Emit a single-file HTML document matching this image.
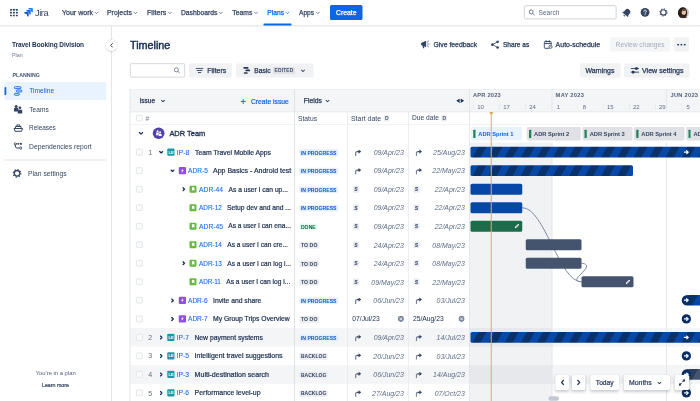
<!DOCTYPE html>
<html><head><meta charset="utf-8"><title>Timeline</title>
<style>
html,body{margin:0;padding:0;}
body{width:700px;height:401px;overflow:hidden;background:#fff;position:relative;font-family:"Liberation Sans",sans-serif;}
.t{position:absolute;white-space:nowrap;margin:0;padding:0;}
.b{position:absolute;margin:0;padding:0;display:block;}
#root{position:absolute;left:0;top:0;width:2800px;height:1604px;transform:scale(0.25);transform-origin:0 0;}
#wrap{position:absolute;left:0;top:0;width:700px;height:401px;overflow:hidden;filter:saturate(1.0001);}
</style></head><body><div id="wrap"><div id="root">
<div class="b" style="left:0px;top:0px;width:2800px;height:101.2px;background:#fff;"></div>
<div class="b" style="left:0px;top:101.2px;width:2800px;height:4px;background:#e3e5ea;"></div>
<div class="b" style="left:0px;top:105.2px;width:2800px;height:4.8px;background:linear-gradient(#eef0f2,#fff);"></div>
<svg class="b" style="left:40.4px;top:35.2px;width:31.2px;height:31.2px;" viewBox="0 0 8.2 8.2"><rect x="0.0" y="0.0" width="2" height="2" rx="0.4" fill="#344563"/><rect x="3.1" y="0.0" width="2" height="2" rx="0.4" fill="#344563"/><rect x="6.2" y="0.0" width="2" height="2" rx="0.4" fill="#344563"/><rect x="0.0" y="3.1" width="2" height="2" rx="0.4" fill="#344563"/><rect x="3.1" y="3.1" width="2" height="2" rx="0.4" fill="#344563"/><rect x="6.2" y="3.1" width="2" height="2" rx="0.4" fill="#344563"/><rect x="0.0" y="6.2" width="2" height="2" rx="0.4" fill="#344563"/><rect x="3.1" y="6.2" width="2" height="2" rx="0.4" fill="#344563"/><rect x="6.2" y="6.2" width="2" height="2" rx="0.4" fill="#344563"/></svg>
<svg class="b" style="left:96.4px;top:32.4px;width:35.2px;height:35.2px;" viewBox="0 0 9 9"><path d="M8.6 0 H4.4 a1.9 1.9 0 0 0 1.9 1.9 h0.8 v0.75 a1.9 1.9 0 0 0 1.9 1.9 V0.4 A0.4 0.4 0 0 0 8.6 0z" fill="#2684ff"/><path d="M6.5 2.1 H2.3 a1.9 1.9 0 0 0 1.9 1.9 h0.8 v0.75 a1.9 1.9 0 0 0 1.9 1.9 V2.5 A0.4 0.4 0 0 0 6.5 2.1z" fill="#1a6ff0"/><path d="M4.4 4.2 H0.2 a1.9 1.9 0 0 0 1.9 1.9 h0.8 v0.75 a1.9 1.9 0 0 0 1.9 1.9 V4.6 A0.4 0.4 0 0 0 4.4 4.2z" fill="#0c5ad8"/></svg>
<div class="t" style="left:140px;top:26.88px;font-size:37.2px;line-height:44.64px;color:#344563;letter-spacing:-1.69px;">Jira</div>
<div class="t" style="left:248px;top:33.12px;font-size:28.12px;line-height:33.76px;color:#344563;-webkit-text-stroke:1px #344563;">Your work</div>
<svg class="b" style="left:376.4px;top:44.8px;width:19.2px;height:12.8px;" viewBox="0 0 6 4"><path d="M1 1 L3 3 L5 1" fill="none" stroke="#344563" stroke-width="0.8" stroke-linecap="round" stroke-linejoin="round"/></svg>
<div class="t" style="left:428px;top:33.4px;font-size:27.68px;line-height:33.2px;color:#344563;-webkit-text-stroke:1px #344563;">Projects</div>
<svg class="b" style="left:532.4px;top:44.8px;width:19.2px;height:12.8px;" viewBox="0 0 6 4"><path d="M1 1 L3 3 L5 1" fill="none" stroke="#344563" stroke-width="0.8" stroke-linecap="round" stroke-linejoin="round"/></svg>
<div class="t" style="left:588px;top:33px;font-size:28.36px;line-height:34.04px;color:#344563;-webkit-text-stroke:1px #344563;">Filters</div>
<svg class="b" style="left:670.4px;top:44.8px;width:19.2px;height:12.8px;" viewBox="0 0 6 4"><path d="M1 1 L3 3 L5 1" fill="none" stroke="#344563" stroke-width="0.8" stroke-linecap="round" stroke-linejoin="round"/></svg>
<div class="t" style="left:724px;top:33.84px;font-size:26.92px;line-height:32.32px;color:#344563;letter-spacing:0px;-webkit-text-stroke:1px #344563;">Dashboards</div>
<svg class="b" style="left:874.4px;top:44.8px;width:19.2px;height:12.8px;" viewBox="0 0 6 4"><path d="M1 1 L3 3 L5 1" fill="none" stroke="#344563" stroke-width="0.8" stroke-linecap="round" stroke-linejoin="round"/></svg>
<div class="t" style="left:929.2px;top:33.72px;font-size:27.16px;line-height:32.6px;color:#344563;-webkit-text-stroke:1px #344563;">Teams</div>
<svg class="b" style="left:1014.4px;top:44.8px;width:19.2px;height:12.8px;" viewBox="0 0 6 4"><path d="M1 1 L3 3 L5 1" fill="none" stroke="#344563" stroke-width="0.8" stroke-linecap="round" stroke-linejoin="round"/></svg>
<div class="t" style="left:1069.2px;top:33.96px;font-size:26.72px;line-height:32.08px;color:#0c66e4;letter-spacing:-0.01px;-webkit-text-stroke:1px #0c66e4;">Plans</div>
<svg class="b" style="left:1140.4px;top:44.8px;width:19.2px;height:12.8px;" viewBox="0 0 6 4"><path d="M1 1 L3 3 L5 1" fill="none" stroke="#0c66e4" stroke-width="0.8" stroke-linecap="round" stroke-linejoin="round"/></svg>
<div class="t" style="left:1196px;top:34.2px;font-size:26.32px;line-height:31.6px;color:#344563;-webkit-text-stroke:1px #344563;">Apps</div>
<svg class="b" style="left:1262.4px;top:44.8px;width:19.2px;height:12.8px;" viewBox="0 0 6 4"><path d="M1 1 L3 3 L5 1" fill="none" stroke="#344563" stroke-width="0.8" stroke-linecap="round" stroke-linejoin="round"/></svg>
<div class="b" style="left:1054px;top:94.4px;width:112px;height:7.2px;background:#0c66e4;border-radius:2.4px;"></div>
<div class="b" style="left:1320px;top:20px;width:130px;height:60px;background:#0c66e4;border-radius:6.4px;"></div>
<div class="t" style="left:1344px;top:33.6px;font-size:27.32px;line-height:32.8px;color:#fff;-webkit-text-stroke:1px #fff;">Create</div>
<div class="b" style="left:2096px;top:21.2px;width:370px;height:56px;background:#fff;border-radius:8px;border:3.6px solid #c1c7d0;box-sizing:border-box;"></div>
<svg class="b" style="left:2113.2px;top:36px;width:28px;height:28px;" viewBox="0 0 6 6"><circle cx="2.5" cy="2.5" r="1.7" fill="none" stroke="#5e6c84" stroke-width="0.75"/><path d="M3.8 3.8 L5.3 5.3" stroke="#5e6c84" stroke-width="0.75" stroke-linecap="round"/></svg>
<div class="t" style="left:2154px;top:33.68px;font-size:26.52px;line-height:31.84px;color:#5e6c84;letter-spacing:-0px;">Search</div>
<svg class="b" style="left:2486.4px;top:29.6px;width:41.6px;height:41.6px;" viewBox="0 0 10 10"><g transform="rotate(40 5 5)"><path d="M5 1.2 a2.7 2.7 0 0 1 2.7 2.7 v1.9 l0.9 1.2 v0.5 h-7.2 v-0.5 l0.9-1.2 v-1.9 a2.7 2.7 0 0 1 2.7-2.7z" fill="#344563"/><path d="M3.9 8.1 h2.2 a1.1 1.1 0 0 1 -2.2 0z" fill="#344563"/></g></svg>
<svg class="b" style="left:2561.2px;top:30.4px;width:38.4px;height:38.4px;" viewBox="0 0 10 10"><circle cx="5" cy="5" r="4.6" fill="#344563"/><path d="M3.7 4 a1.35 1.35 0 1 1 2 1.2 c-0.5 0.3 -0.7 0.5 -0.7 1" fill="none" stroke="#fff" stroke-width="0.9" stroke-linecap="round"/><circle cx="5" cy="7.5" r="0.55" fill="#fff"/></svg>
<svg class="b" style="left:2635.2px;top:31.2px;width:37.6px;height:37.6px;" viewBox="0 0 10 10"><circle cx="5" cy="5" r="2.9" fill="none" stroke="#344563" stroke-width="1.25"/><circle cx="5" cy="5" r="3.95" fill="none" stroke="#344563" stroke-width="1.0" stroke-dasharray="1.25 1.85"/></svg>
<svg class="b" style="left:2711.2px;top:27.6px;width:45.6px;height:45.6px;" viewBox="0 0 10 10"><defs><clipPath id="av"><circle cx="5" cy="5" r="5"/></clipPath></defs><g clip-path="url(#av)"><rect width="10" height="10" fill="#cfc9c4"/><ellipse cx="4.2" cy="5.2" rx="4.1" ry="5.2" fill="#2a1c17"/><ellipse cx="5.3" cy="4.5" rx="1.9" ry="2.4" fill="#e7c3a8"/><path d="M1 10 Q5.2 6 9.4 10z" fill="#3a2924"/><path d="M3.3 4.2 Q4.8 1.2 7.2 3.6 Q5.6 2.6 3.3 4.2z" fill="#2a1c17"/></g></svg>
<div class="b" style="left:444px;top:104px;width:4px;height:1500px;background:#e4e6ea;"></div>
<div class="t" style="left:48px;top:162.4px;font-size:26px;line-height:31.2px;color:#172b4d;font-weight:700;letter-spacing:-0.29px;">Travel Booking Division</div>
<div class="t" style="left:48px;top:205.68px;font-size:21.2px;line-height:25.44px;color:#6b778c;letter-spacing:-0.01px;">Plan</div>
<div class="t" style="left:49.6px;top:288.16px;font-size:21.08px;line-height:25.28px;color:#44546f;font-weight:700;letter-spacing:-0.01px;">PLANNING</div>
<div class="b" style="left:18.4px;top:328px;width:406.4px;height:72px;background:#e9f2ff;border-radius:6px;"></div>
<div class="b" style="left:17.6px;top:347.6px;width:7.2px;height:32.4px;background:#0c66e4;border-radius:3.6px;"></div>
<svg class="b" style="left:53.6px;top:343.6px;width:37.6px;height:40px;" viewBox="0 0 9.4 10"><rect x="0.85" y="0.75" width="6.6" height="1.9" rx="0.95" fill="none" stroke="#0c66e4" stroke-width="0.95"/><rect x="3" y="4.05" width="5.5" height="1.9" rx="0.95" fill="none" stroke="#0c66e4" stroke-width="0.95"/><rect x="0.85" y="7.35" width="5" height="1.9" rx="0.95" fill="none" stroke="#0c66e4" stroke-width="0.95"/></svg>
<div class="t" style="left:117.2px;top:348.48px;font-size:26.52px;line-height:31.84px;color:#0c66e4;letter-spacing:-0px;">Timeline</div>
<svg class="b" style="left:53.6px;top:418.4px;width:37.6px;height:37.6px;" viewBox="0 0 9.4 9.4"><circle cx="2.6" cy="1.9" r="1.5" fill="#344563"/><circle cx="6.4" cy="3.3" r="1.4" fill="#344563"/><path d="M0.4 4.4 a0.8 0.8 0 0 1 0.8-0.8 h2.8 a0.8 0.8 0 0 1 0.8 0.8 v2.6 h-4.4z" fill="#344563"/><path d="M4.2 6 a0.8 0.8 0 0 1 0.8-0.8 h3 a0.8 0.8 0 0 1 0.8 0.8 v2.4 a0.6 0.6 0 0 1 -0.6 0.6 h-3.4 a0.6 0.6 0 0 1 -0.6-0.6z" fill="#344563"/></svg>
<div class="t" style="left:117.2px;top:421.8px;font-size:26.36px;line-height:31.64px;color:#344563;letter-spacing:-0.01px;">Teams</div>
<svg class="b" style="left:52.8px;top:494.4px;width:40px;height:34.4px;" viewBox="0 0 10 8.6"><path d="M0.7 5 h8.6 l-1 2.8 h-6.6z" fill="none" stroke="#344563" stroke-width="1" stroke-linejoin="round"/><path d="M2.2 5 V3 h5.6 V5 M3.6 3 V1.4 h2.8 V3" fill="none" stroke="#344563" stroke-width="1" stroke-linejoin="round"/></svg>
<div class="t" style="left:116.4px;top:496.8px;font-size:26px;line-height:31.2px;color:#344563;letter-spacing:-0.2px;">Releases</div>
<svg class="b" style="left:54.4px;top:568.8px;width:40px;height:36px;" viewBox="0 0 10 9"><path d="M1.8 1.6 v2.2 a2 2 0 0 0 2 2 h2.2 M1.8 1.6 h4" fill="none" stroke="#344563" stroke-width="1"/><circle cx="1.8" cy="1.6" r="1.1" fill="#fff" stroke="#344563" stroke-width="0.9"/><circle cx="7.4" cy="1.6" r="1.1" fill="#344563"/><circle cx="7.2" cy="5.8" r="1.1" fill="#fff" stroke="#344563" stroke-width="0.9"/><path d="M4.6 0.5 l1.3 1.1 l-1.3 1.1z" fill="#344563"/></svg>
<div class="t" style="left:116.4px;top:570.64px;font-size:26.96px;line-height:32.36px;color:#344563;letter-spacing:0px;">Dependencies report</div>
<div class="b" style="left:16px;top:638.4px;width:410.4px;height:3.6px;background:#e1e4e8;"></div>
<svg class="b" style="left:48.8px;top:674.4px;width:38.4px;height:38.4px;" viewBox="0 0 10 10"><circle cx="5" cy="5" r="2.9" fill="none" stroke="#344563" stroke-width="1.4"/><circle cx="5" cy="5" r="4" fill="none" stroke="#344563" stroke-width="1.2" stroke-dasharray="1.3 1.84"/></svg>
<div class="t" style="left:112.4px;top:677.48px;font-size:26.88px;line-height:32.24px;color:#344563;letter-spacing:0.01px;">Plan settings</div>
<div class="t" style="left:142.8px;top:1477.52px;font-size:23.44px;line-height:28.12px;color:#505f79;">You're in a plan</div>
<div class="t" style="left:168px;top:1529.32px;font-size:21.12px;line-height:25.36px;color:#344563;-webkit-text-stroke:0.8px #344563;">Learn more</div>
<div class="b" style="left:423.2px;top:159.2px;width:44.8px;height:44.8px;background:#fff;border-radius:22.4px;box-shadow:0 0 0 2px rgba(9,30,66,0.10),0 3.2px 6.4px rgba(9,30,66,0.16);"></div>
<svg class="b" style="left:438.4px;top:170.4px;width:16px;height:22.4px;" viewBox="0 0 4 5.6"><path d="M2.9 1 L1.2 2.8 L2.9 4.6" fill="none" stroke="#344563" stroke-width="1" stroke-linecap="round" stroke-linejoin="round"/></svg>
<div class="t" style="left:520px;top:154.16px;font-size:43.08px;line-height:51.68px;color:#172b4d;-webkit-text-stroke:1.8px #172b4d;">Timeline</div>
<svg class="b" style="left:1682px;top:159.2px;width:38.4px;height:37.6px;" viewBox="0 0 9.6 9.4"><path d="M0.6 3.3 L5.6 1 V7.4 L0.6 5.3z" fill="#344563"/><path d="M1.8 5.6 L2.6 8.6 h1.3 L3.3 5.9z" fill="#344563"/><path d="M6.8 2.2 l1.2-0.9 M7 4.2 h1.7 M6.8 6 l1.2 0.9" stroke="#344563" stroke-width="0.7" stroke-linecap="round"/></svg>
<div class="t" style="left:1734px;top:161.64px;font-size:27.28px;line-height:32.72px;color:#253858;-webkit-text-stroke:1px #253858;">Give feedback</div>
<svg class="b" style="left:1963.2px;top:161.2px;width:34.4px;height:35.2px;" viewBox="0 0 8.6 8.8"><path d="M6.8 1.6 L1.8 4.4 L6.8 7.2" fill="none" stroke="#344563" stroke-width="0.8"/><circle cx="6.9" cy="1.5" r="1.3" fill="#344563"/><circle cx="1.6" cy="4.4" r="1.3" fill="#344563"/><circle cx="6.9" cy="7.3" r="1.3" fill="#344563"/></svg>
<div class="t" style="left:2012px;top:162.28px;font-size:26.2px;line-height:31.44px;color:#253858;letter-spacing:-0.01px;-webkit-text-stroke:1px #253858;">Share as</div>
<svg class="b" style="left:2174.4px;top:160px;width:38.4px;height:37.6px;" viewBox="0 0 9.6 9.4"><rect x="0.7" y="1.5" width="7" height="6.8" rx="1" fill="none" stroke="#344563" stroke-width="1"/><path d="M0.7 3.6 h7" stroke="#344563" stroke-width="1"/><path d="M2.6 0.5 v1.6 M5.8 0.5 v1.6" stroke="#344563" stroke-width="0.9" stroke-linecap="round"/><circle cx="7" cy="6.8" r="2.3" fill="#fff"/><circle cx="7" cy="6.8" r="1.6" fill="none" stroke="#344563" stroke-width="0.8"/><path d="M7 5.9 v1 l0.6 0.4" stroke="#344563" stroke-width="0.6" fill="none"/></svg>
<div class="t" style="left:2222.4px;top:161.24px;font-size:27.92px;line-height:33.52px;color:#253858;letter-spacing:-0.01px;-webkit-text-stroke:1px #253858;">Auto-schedule</div>
<div class="b" style="left:2440px;top:148.8px;width:240px;height:56.8px;background:#f4f5f7;border-radius:6.4px;"></div>
<div class="t" style="left:2462.4px;top:161.96px;font-size:26.72px;line-height:32.08px;color:#a5adba;letter-spacing:-0px;">Review changes</div>
<div class="b" style="left:2696px;top:148.8px;width:60px;height:56.8px;background:#f1f2f4;border-radius:6.4px;"></div>
<svg class="b" style="left:2706.8px;top:173.6px;width:37.6px;height:9.6px;" viewBox="0 0 9.4 2.4"><circle cx="1.4" cy="1.2" r="0.95" fill="#253858"/><circle cx="4.7" cy="1.2" r="0.95" fill="#253858"/><circle cx="8" cy="1.2" r="0.95" fill="#253858"/></svg>
<div class="b" style="left:520px;top:252.8px;width:220px;height:56.8px;background:#fff;border-radius:6.4px;border:3.6px solid #c9ced6;box-sizing:border-box;"></div>
<svg class="b" style="left:694.4px;top:268px;width:27.2px;height:27.2px;" viewBox="0 0 6 6"><circle cx="2.5" cy="2.5" r="1.8" fill="none" stroke="#5e6c84" stroke-width="0.7"/><path d="M3.9 3.9 L5.4 5.4" stroke="#5e6c84" stroke-width="0.7" stroke-linecap="round"/></svg>
<div class="b" style="left:756px;top:252.8px;width:172px;height:56.8px;background:#f1f2f4;border-radius:6.4px;"></div>
<svg class="b" style="left:781.6px;top:271.2px;width:32.8px;height:21.6px;" viewBox="0 0 8.2 5.4"><path d="M0.5 0.6 h7.2 M1.7 2.7 h4.8 M2.9 4.8 h2.4" stroke="#253858" stroke-width="0.9" stroke-linecap="round"/></svg>
<div class="t" style="left:828.8px;top:264.68px;font-size:28.2px;line-height:33.84px;color:#253858;letter-spacing:0px;-webkit-text-stroke:1px #253858;">Filters</div>
<div class="b" style="left:944px;top:252.8px;width:310.4px;height:56.8px;background:#f1f2f4;border-radius:6.4px;"></div>
<svg class="b" style="left:971.2px;top:267.2px;width:32px;height:29.6px;" viewBox="0 0 8 7.4"><rect x="0.6" y="0.3" width="5.2" height="1.7" rx="0.85" fill="#253858"/><rect x="2.6" y="2.85" width="4.8" height="1.7" rx="0.85" fill="#253858"/><rect x="1" y="5.4" width="4" height="1.7" rx="0.85" fill="#253858"/></svg>
<div class="t" style="left:1016.8px;top:265.48px;font-size:26.84px;line-height:32.2px;color:#253858;letter-spacing:-0.01px;-webkit-text-stroke:1px #253858;">Basic</div>
<div class="b" style="left:1092px;top:267.6px;width:88px;height:28px;background:#dfe1e6;border-radius:4px;"></div>
<div class="t" style="left:1098.4px;top:270.44px;font-size:19.6px;line-height:23.52px;color:#44546f;font-weight:700;letter-spacing:0.56px;">EDITED</div>
<svg class="b" style="left:1203px;top:276.8px;width:18px;height:12px;" viewBox="0 0 6 4"><path d="M1 1 L3 3 L5 1" fill="none" stroke="#253858" stroke-width="1.4" stroke-linecap="round" stroke-linejoin="round"/></svg>
<div class="b" style="left:2320px;top:252.8px;width:161.6px;height:56.8px;background:#f1f2f4;border-radius:6.4px;"></div>
<div class="t" style="left:2341.6px;top:264.96px;font-size:27.72px;line-height:33.28px;color:#253858;letter-spacing:-0.01px;-webkit-text-stroke:1px #253858;">Warnings</div>
<div class="b" style="left:2496px;top:252.8px;width:261.6px;height:56.8px;background:#f1f2f4;border-radius:6.4px;"></div>
<svg class="b" style="left:2522.4px;top:267.2px;width:34.4px;height:28.8px;" viewBox="0 0 8.6 7.2"><path d="M0.5 1.8 h7.6 M0.5 5.4 h7.6" stroke="#253858" stroke-width="0.9" stroke-linecap="round"/><rect x="4.6" y="0.5" width="2.6" height="2.6" rx="0.6" fill="#253858"/><rect x="1.4" y="4.1" width="2.6" height="2.6" rx="0.6" fill="#253858"/></svg>
<div class="t" style="left:2568px;top:264.6px;font-size:28.32px;line-height:34px;color:#253858;letter-spacing:0px;-webkit-text-stroke:1px #253858;">View settings</div>
<div class="b" style="left:520px;top:356px;width:2280px;height:91.2px;background:#f4f5f7;"></div>
<div class="b" style="left:520px;top:356px;width:2280px;height:3.2px;background:#ebecf0;"></div>
<div class="b" style="left:520px;top:1312.36px;width:2280px;height:74.08px;background:#f4f5f7;"></div>
<div class="b" style="left:520px;top:1460.52px;width:2280px;height:74.08px;background:#f4f5f7;"></div>
<div class="b" style="left:1878.4px;top:570.4px;width:329.6px;height:1033.6px;background:#f1f2f4;"></div>
<div class="b" style="left:1878.4px;top:1312.36px;width:329.6px;height:74.08px;background:#e6e8ec;"></div>
<div class="b" style="left:2208px;top:1312.36px;width:592px;height:74.08px;background:#f4f5f7;"></div>
<div class="b" style="left:1878.4px;top:1460.52px;width:329.6px;height:74.08px;background:#e6e8ec;"></div>
<div class="b" style="left:2208px;top:1460.52px;width:592px;height:74.08px;background:#f4f5f7;"></div>
<div class="b" style="left:518.4px;top:356px;width:3.6px;height:1248px;background:#e4e6ea;"></div>
<div class="b" style="left:1176px;top:356px;width:3.6px;height:1248px;background:#dfe2e7;"></div>
<div class="b" style="left:1388.8px;top:449.2px;width:3.2px;height:1156px;background:#e6e8ec;"></div>
<div class="b" style="left:1633.2px;top:449.2px;width:3.2px;height:1156px;background:#e6e8ec;"></div>
<div class="b" style="left:1876.8px;top:356px;width:3.6px;height:1248px;background:#dfe2e7;"></div>
<div class="b" style="left:520px;top:446px;width:2280px;height:3.2px;background:#e1e4e8;"></div>
<div class="b" style="left:520px;top:497.2px;width:2280px;height:2.8px;background:#eceef1;"></div>
<div class="b" style="left:2206.4px;top:356px;width:3.2px;height:90.4px;background:#e6e8ec;"></div>
<div class="b" style="left:2664.4px;top:356px;width:3.2px;height:90.4px;background:#e6e8ec;"></div>
<div class="b" style="left:2206.4px;top:570.4px;width:3.2px;height:1036px;background:#e4e6ea;"></div>
<div class="b" style="left:2664.4px;top:570.4px;width:3.2px;height:1036px;background:#e4e6ea;"></div>
<div class="t" style="left:558px;top:386.72px;font-size:26.12px;line-height:31.36px;color:#253858;letter-spacing:-0.01px;-webkit-text-stroke:1px #253858;">Issue</div>
<svg class="b" style="left:643px;top:397.6px;width:18px;height:12px;" viewBox="0 0 6 4"><path d="M1 1 L3 3 L5 1" fill="none" stroke="#253858" stroke-width="1.4" stroke-linecap="round" stroke-linejoin="round"/></svg>
<svg class="b" style="left:962.4px;top:394.8px;width:21.6px;height:21.6px;" viewBox="0 0 5.4 5.4"><path d="M2.7 0.5 v4.4 M0.5 2.7 h4.4" stroke="#0c66e4" stroke-width="0.9" stroke-linecap="round"/></svg>
<div class="t" style="left:1004px;top:389.44px;font-size:26.92px;line-height:32.32px;color:#0c66e4;letter-spacing:0.01px;-webkit-text-stroke:0.8px #0c66e4;">Create issue</div>
<div class="t" style="left:1215.2px;top:386.04px;font-size:27.28px;line-height:32.72px;color:#253858;letter-spacing:0px;-webkit-text-stroke:1px #253858;">Fields</div>
<svg class="b" style="left:1300.6px;top:397.6px;width:18px;height:12px;" viewBox="0 0 6 4"><path d="M1 1 L3 3 L5 1" fill="none" stroke="#253858" stroke-width="1.4" stroke-linecap="round" stroke-linejoin="round"/></svg>
<svg class="b" style="left:1824px;top:393.6px;width:33.6px;height:18.4px;" viewBox="0 0 8.4 4.6"><path d="M0.2 2.3 L3.7 0.1 V4.5z M8.2 2.3 L4.7 0.1 V4.5z" fill="#253858"/></svg>
<div class="b" style="left:544.4px;top:458.8px;width:26.4px;height:26.4px;background:#fafbfc;border-radius:4.8px;border:3.6px solid #dcdfe4;box-sizing:border-box;"></div>
<div class="t" style="left:581.6px;top:457.84px;font-size:25.6px;line-height:30.72px;color:#6b778c;font-style:italic;">#</div>
<div class="t" style="left:1192px;top:457.32px;font-size:26.8px;line-height:32.16px;color:#344563;">Status</div>
<div class="t" style="left:1404px;top:456.8px;font-size:27.68px;line-height:33.2px;color:#344563;">Start date</div>
<div class="b" style="left:1534.8px;top:460px;width:23.2px;height:26.4px;background:#ebecf0;border-radius:4px;"></div>
<div class="t" style="left:1539.6px;top:461.6px;font-size:20px;line-height:24px;color:#505f79;font-weight:700;">D</div>
<div class="t" style="left:1648px;top:457.44px;font-size:26.6px;line-height:31.92px;color:#344563;letter-spacing:0px;">Due date</div>
<div class="b" style="left:1765.2px;top:460px;width:23.2px;height:26.4px;background:#ebecf0;border-radius:4px;"></div>
<div class="t" style="left:1770px;top:461.6px;font-size:20px;line-height:24px;color:#505f79;font-weight:700;">D</div>
<svg class="b" style="left:553.2px;top:526.4px;width:21.6px;height:14.4px;" viewBox="0 0 6 4"><path d="M1 1 L3 3 L5 1" fill="none" stroke="#172b4d" stroke-width="1.3" stroke-linecap="round" stroke-linejoin="round"/></svg>
<div class="b" style="left:611.2px;top:509.6px;width:46.4px;height:46.4px;background:#5243aa;border-radius:23.2px;"></div>
<svg class="b" style="left:622px;top:519.6px;width:25.6px;height:25.6px;" viewBox="0 0 6.4 6.4"><circle cx="2.1" cy="1.2" r="1.0" fill="#fff"/><circle cx="4.6" cy="2.2" r="0.95" fill="#fff"/><path d="M0.6 3.1 a0.5 0.5 0 0 1 0.5-0.5 h2 a0.5 0.5 0 0 1 0.5 0.5 v0.4 a1.3 1.3 0 0 0 -0.9 1.2 v0.6 h-2.1z" fill="#fff"/><path d="M3.1 4.2 a0.5 0.5 0 0 1 0.5-0.5 h2 a0.5 0.5 0 0 1 0.5 0.5 v1.6 a0.4 0.4 0 0 1 -0.4 0.4 h-2.2 a0.4 0.4 0 0 1 -0.4-0.4z" fill="#fff"/></svg>
<div class="t" style="left:677.6px;top:516.16px;font-size:29.72px;line-height:35.68px;color:#172b4d;letter-spacing:0.01px;-webkit-text-stroke:1.2px #172b4d;">ADR Team</div>
<div class="b" style="left:544.4px;top:595.4px;width:26.4px;height:26.4px;background:#fafbfc;border-radius:4.8px;border:3.6px solid #dcdfe4;box-sizing:border-box;"></div>
<div class="t" style="left:592.8px;top:592.6px;font-size:28px;line-height:33.6px;color:#5e6c84;">1</div>
<svg class="b" style="left:636.2px;top:603px;width:18px;height:12px;" viewBox="0 0 6 4"><path d="M1 1 L3 3 L5 1" fill="none" stroke="#172b4d" stroke-width="1.7" stroke-linecap="round" stroke-linejoin="round"/></svg>
<div class="b" style="left:668.8px;top:593.8px;width:29.6px;height:29.6px;background:#1d9aaa;border-radius:4px;"></div>
<div class="t" style="left:673.6px;top:599.24px;font-size:16.28px;line-height:19.52px;color:#fff;font-weight:700;">LE</div>
<div class="t" style="left:706px;top:592.12px;font-size:28.12px;line-height:33.76px;color:#1a6fe6;letter-spacing:0.01px;-webkit-text-stroke:0.4px #1a6fe6;">IP-8</div>
<div class="t" style="left:780px;top:592.68px;font-size:27.2px;line-height:32.64px;color:#172b4d;letter-spacing:0px;-webkit-text-stroke:0.8px #172b4d;">Team Travel Mobile Apps</div>
<div class="b" style="left:1196.8px;top:597.4px;width:155.2px;height:26.4px;background:#e4eeff;border-radius:4px;"></div>
<div class="t" style="left:1203.6px;top:598.52px;font-size:20.48px;line-height:24.56px;color:#0c56cc;font-weight:700;letter-spacing:0.01px;">IN PROGRESS</div>
<svg class="b" style="left:1418.8px;top:595.8px;width:26.4px;height:28.8px;" viewBox="0 0 6.6 7.2"><path d="M0.9 7 V4.1 a1.5 1.5 0 0 1 1.5-1.5" fill="none" stroke="#7a869a" stroke-width="1.3"/><path d="M2.2 2.6 H4.2" fill="none" stroke="#344563" stroke-width="1.3"/><path d="M3.8 0.4 L6.5 2.6 L3.8 4.8z" fill="#344563"/></svg>
<svg class="b" style="left:1662px;top:595.8px;width:26.4px;height:28.8px;" viewBox="0 0 6.6 7.2"><path d="M0.9 7 V4.1 a1.5 1.5 0 0 1 1.5-1.5" fill="none" stroke="#7a869a" stroke-width="1.3"/><path d="M2.2 2.6 H4.2" fill="none" stroke="#344563" stroke-width="1.3"/><path d="M3.8 0.4 L6.5 2.6 L3.8 4.8z" fill="#344563"/></svg>
<div class="t" style="left:1494.64px;top:593.12px;font-size:27.8px;line-height:33.36px;color:#5e6c84;font-style:italic;">09/Apr/23</div>
<div class="t" style="left:1732.44px;top:593.12px;font-size:27.8px;line-height:33.36px;color:#5e6c84;font-style:italic;">25/Aug/23</div>
<div class="b" style="left:544.4px;top:669.48px;width:26.4px;height:26.4px;background:#fafbfc;border-radius:4.8px;border:3.6px solid #dcdfe4;box-sizing:border-box;"></div>
<svg class="b" style="left:681.4px;top:677.08px;width:18px;height:12px;" viewBox="0 0 6 4"><path d="M1 1 L3 3 L5 1" fill="none" stroke="#172b4d" stroke-width="1.7" stroke-linecap="round" stroke-linejoin="round"/></svg>
<div class="b" style="left:714.8px;top:668.28px;width:28.8px;height:28.8px;background:#904ee2;border-radius:4px;"></div>
<svg class="b" style="left:720.8px;top:672.68px;width:16.8px;height:20px;" viewBox="0 0 4.2 5"><path d="M2.9 0.2 L0.7 2.9 H2 L1.3 4.8 L3.6 2.1 H2.3z" fill="#fff"/></svg>
<div class="t" style="left:752px;top:667.24px;font-size:26.4px;line-height:31.68px;color:#1a6fe6;-webkit-text-stroke:0.4px #1a6fe6;">ADR-5</div>
<div class="t" style="left:852px;top:666.24px;font-size:28.04px;line-height:33.64px;color:#172b4d;-webkit-text-stroke:0.8px #172b4d;">App Basics - Android test</div>
<div class="b" style="left:1196.8px;top:671.48px;width:155.2px;height:26.4px;background:#e4eeff;border-radius:4px;"></div>
<div class="t" style="left:1203.6px;top:672.6px;font-size:20.48px;line-height:24.56px;color:#0c56cc;font-weight:700;letter-spacing:0.01px;">IN PROGRESS</div>
<svg class="b" style="left:1418.8px;top:669.88px;width:26.4px;height:28.8px;" viewBox="0 0 6.6 7.2"><path d="M0.9 7 V4.1 a1.5 1.5 0 0 1 1.5-1.5" fill="none" stroke="#7a869a" stroke-width="1.3"/><path d="M2.2 2.6 H4.2" fill="none" stroke="#344563" stroke-width="1.3"/><path d="M3.8 0.4 L6.5 2.6 L3.8 4.8z" fill="#344563"/></svg>
<svg class="b" style="left:1662px;top:669.88px;width:26.4px;height:28.8px;" viewBox="0 0 6.6 7.2"><path d="M0.9 7 V4.1 a1.5 1.5 0 0 1 1.5-1.5" fill="none" stroke="#7a869a" stroke-width="1.3"/><path d="M2.2 2.6 H4.2" fill="none" stroke="#344563" stroke-width="1.3"/><path d="M3.8 0.4 L6.5 2.6 L3.8 4.8z" fill="#344563"/></svg>
<div class="t" style="left:1494.64px;top:667.2px;font-size:27.8px;line-height:33.36px;color:#5e6c84;font-style:italic;">09/Apr/23</div>
<div class="t" style="left:1729.4px;top:667.2px;font-size:27.8px;line-height:33.36px;color:#5e6c84;font-style:italic;">22/May/23</div>
<div class="b" style="left:544.4px;top:743.56px;width:26.4px;height:26.4px;background:#fafbfc;border-radius:4.8px;border:3.6px solid #dcdfe4;box-sizing:border-box;"></div>
<svg class="b" style="left:728.8px;top:748.16px;width:12px;height:18px;" viewBox="0 0 4 6"><path d="M1 1 L3 3 L1 5" fill="none" stroke="#172b4d" stroke-width="1.7" stroke-linecap="round" stroke-linejoin="round"/></svg>
<div class="b" style="left:758.4px;top:742.76px;width:28px;height:28px;background:#63ba3c;border-radius:4px;"></div>
<svg class="b" style="left:765.6px;top:747.96px;width:13.6px;height:17.6px;" viewBox="0 0 3.4 4.4"><path d="M0.3 0.3 h2.8 v3.8 l-1.4-1.1 l-1.4 1.1z" fill="#fff"/></svg>
<div class="t" style="left:796px;top:740.96px;font-size:27px;line-height:32.4px;color:#1a6fe6;letter-spacing:-0px;-webkit-text-stroke:0.4px #1a6fe6;">ADR-44</div>
<div class="t" style="left:914px;top:741.12px;font-size:26.72px;line-height:32.08px;color:#172b4d;-webkit-text-stroke:0.8px #172b4d;">As a user I can up...</div>
<div class="b" style="left:1196.8px;top:745.56px;width:155.2px;height:26.4px;background:#e4eeff;border-radius:4px;"></div>
<div class="t" style="left:1203.6px;top:746.68px;font-size:20.48px;line-height:24.56px;color:#0c56cc;font-weight:700;letter-spacing:0.01px;">IN PROGRESS</div>
<div class="b" style="left:1412px;top:743.56px;width:24px;height:27.2px;background:#ebecf0;border-radius:4px;"></div>
<div class="t" style="left:1417px;top:741px;font-size:25.6px;line-height:30.72px;color:#42526e;font-weight:700;font-style:italic;">s</div>
<div class="b" style="left:1654.4px;top:743.56px;width:24px;height:27.2px;background:#ebecf0;border-radius:4px;"></div>
<div class="t" style="left:1659.4px;top:741px;font-size:25.6px;line-height:30.72px;color:#42526e;font-weight:700;font-style:italic;">s</div>
<div class="t" style="left:1494.64px;top:741.28px;font-size:27.8px;line-height:33.36px;color:#5e6c84;font-style:italic;">09/Apr/23</div>
<div class="t" style="left:1738.64px;top:741.28px;font-size:27.8px;line-height:33.36px;color:#5e6c84;font-style:italic;">22/Apr/23</div>
<div class="b" style="left:544.4px;top:817.64px;width:26.4px;height:26.4px;background:#fafbfc;border-radius:4.8px;border:3.6px solid #dcdfe4;box-sizing:border-box;"></div>
<div class="b" style="left:758.4px;top:816.84px;width:28px;height:28px;background:#63ba3c;border-radius:4px;"></div>
<svg class="b" style="left:765.6px;top:822.04px;width:13.6px;height:17.6px;" viewBox="0 0 3.4 4.4"><path d="M0.3 0.3 h2.8 v3.8 l-1.4-1.1 l-1.4 1.1z" fill="#fff"/></svg>
<div class="t" style="left:796px;top:815.8px;font-size:25.76px;line-height:30.92px;color:#1a6fe6;-webkit-text-stroke:0.4px #1a6fe6;">ADR-12</div>
<div class="t" style="left:908px;top:815.08px;font-size:26.92px;line-height:32.32px;color:#172b4d;-webkit-text-stroke:0.8px #172b4d;">Setup dev and and ...</div>
<div class="b" style="left:1196.8px;top:819.64px;width:155.2px;height:26.4px;background:#e4eeff;border-radius:4px;"></div>
<div class="t" style="left:1203.6px;top:820.76px;font-size:20.48px;line-height:24.56px;color:#0c56cc;font-weight:700;letter-spacing:0.01px;">IN PROGRESS</div>
<div class="b" style="left:1412px;top:817.64px;width:24px;height:27.2px;background:#ebecf0;border-radius:4px;"></div>
<div class="t" style="left:1417px;top:815.08px;font-size:25.6px;line-height:30.72px;color:#42526e;font-weight:700;font-style:italic;">s</div>
<div class="b" style="left:1654.4px;top:817.64px;width:24px;height:27.2px;background:#ebecf0;border-radius:4px;"></div>
<div class="t" style="left:1659.4px;top:815.08px;font-size:25.6px;line-height:30.72px;color:#42526e;font-weight:700;font-style:italic;">s</div>
<div class="t" style="left:1494.64px;top:815.36px;font-size:27.8px;line-height:33.36px;color:#5e6c84;font-style:italic;">09/Apr/23</div>
<div class="t" style="left:1738.64px;top:815.36px;font-size:27.8px;line-height:33.36px;color:#5e6c84;font-style:italic;">22/Apr/23</div>
<div class="b" style="left:544.4px;top:891.72px;width:26.4px;height:26.4px;background:#fafbfc;border-radius:4.8px;border:3.6px solid #dcdfe4;box-sizing:border-box;"></div>
<div class="b" style="left:758.4px;top:890.92px;width:28px;height:28px;background:#63ba3c;border-radius:4px;"></div>
<svg class="b" style="left:765.6px;top:896.12px;width:13.6px;height:17.6px;" viewBox="0 0 3.4 4.4"><path d="M0.3 0.3 h2.8 v3.8 l-1.4-1.1 l-1.4 1.1z" fill="#fff"/></svg>
<div class="t" style="left:796px;top:889.12px;font-size:27px;line-height:32.4px;color:#1a6fe6;letter-spacing:-0px;-webkit-text-stroke:0.4px #1a6fe6;">ADR-45</div>
<div class="t" style="left:912.8px;top:889.36px;font-size:26.6px;line-height:31.92px;color:#172b4d;letter-spacing:-0.01px;-webkit-text-stroke:0.8px #172b4d;">As a user I can ena...</div>
<div class="b" style="left:1196.8px;top:893.72px;width:72.4px;height:26.4px;background:#e3fcef;border-radius:4px;"></div>
<div class="t" style="left:1203.6px;top:894.84px;font-size:20.48px;line-height:24.56px;color:#006644;font-weight:700;letter-spacing:0.11px;">DONE</div>
<div class="b" style="left:1412px;top:891.72px;width:24px;height:27.2px;background:#ebecf0;border-radius:4px;"></div>
<div class="t" style="left:1417px;top:889.16px;font-size:25.6px;line-height:30.72px;color:#42526e;font-weight:700;font-style:italic;">s</div>
<div class="b" style="left:1654.4px;top:891.72px;width:24px;height:27.2px;background:#ebecf0;border-radius:4px;"></div>
<div class="t" style="left:1659.4px;top:889.16px;font-size:25.6px;line-height:30.72px;color:#42526e;font-weight:700;font-style:italic;">s</div>
<div class="t" style="left:1494.64px;top:889.44px;font-size:27.8px;line-height:33.36px;color:#5e6c84;font-style:italic;">09/Apr/23</div>
<div class="t" style="left:1738.64px;top:889.44px;font-size:27.8px;line-height:33.36px;color:#5e6c84;font-style:italic;">22/Apr/23</div>
<div class="b" style="left:544.4px;top:965.8px;width:26.4px;height:26.4px;background:#fafbfc;border-radius:4.8px;border:3.6px solid #dcdfe4;box-sizing:border-box;"></div>
<div class="b" style="left:758.4px;top:965px;width:28px;height:28px;background:#63ba3c;border-radius:4px;"></div>
<svg class="b" style="left:765.6px;top:970.2px;width:13.6px;height:17.6px;" viewBox="0 0 3.4 4.4"><path d="M0.3 0.3 h2.8 v3.8 l-1.4-1.1 l-1.4 1.1z" fill="#fff"/></svg>
<div class="t" style="left:796px;top:963.96px;font-size:25.76px;line-height:30.92px;color:#1a6fe6;-webkit-text-stroke:0.4px #1a6fe6;">ADR-14</div>
<div class="t" style="left:909.2px;top:963.52px;font-size:26.44px;line-height:31.72px;color:#172b4d;-webkit-text-stroke:0.8px #172b4d;">As a user I can cre...</div>
<div class="b" style="left:1196.8px;top:967.8px;width:79.2px;height:26.4px;background:#ebecf0;border-radius:4px;"></div>
<div class="t" style="left:1203.6px;top:968.92px;font-size:20.48px;line-height:24.56px;color:#344563;font-weight:700;letter-spacing:0.38px;">TO DO</div>
<div class="b" style="left:1412px;top:965.8px;width:24px;height:27.2px;background:#ebecf0;border-radius:4px;"></div>
<div class="t" style="left:1417px;top:963.24px;font-size:25.6px;line-height:30.72px;color:#42526e;font-weight:700;font-style:italic;">s</div>
<div class="b" style="left:1654.4px;top:965.8px;width:24px;height:27.2px;background:#ebecf0;border-radius:4px;"></div>
<div class="t" style="left:1659.4px;top:963.24px;font-size:25.6px;line-height:30.72px;color:#42526e;font-weight:700;font-style:italic;">s</div>
<div class="t" style="left:1494.64px;top:963.52px;font-size:27.8px;line-height:33.36px;color:#5e6c84;font-style:italic;">24/Apr/23</div>
<div class="t" style="left:1729.4px;top:963.52px;font-size:27.8px;line-height:33.36px;color:#5e6c84;font-style:italic;">08/May/23</div>
<div class="b" style="left:544.4px;top:1039.88px;width:26.4px;height:26.4px;background:#fafbfc;border-radius:4.8px;border:3.6px solid #dcdfe4;box-sizing:border-box;"></div>
<svg class="b" style="left:728.8px;top:1044.48px;width:12px;height:18px;" viewBox="0 0 4 6"><path d="M1 1 L3 3 L1 5" fill="none" stroke="#172b4d" stroke-width="1.7" stroke-linecap="round" stroke-linejoin="round"/></svg>
<div class="b" style="left:758.4px;top:1039.08px;width:28px;height:28px;background:#63ba3c;border-radius:4px;"></div>
<svg class="b" style="left:765.6px;top:1044.28px;width:13.6px;height:17.6px;" viewBox="0 0 3.4 4.4"><path d="M0.3 0.3 h2.8 v3.8 l-1.4-1.1 l-1.4 1.1z" fill="#fff"/></svg>
<div class="t" style="left:796px;top:1038.04px;font-size:25.76px;line-height:30.92px;color:#1a6fe6;-webkit-text-stroke:0.4px #1a6fe6;">ADR-13</div>
<div class="t" style="left:909.2px;top:1037.6px;font-size:26.48px;line-height:31.76px;color:#172b4d;letter-spacing:0.01px;-webkit-text-stroke:0.8px #172b4d;">As a user I can log i...</div>
<div class="b" style="left:1196.8px;top:1041.88px;width:79.2px;height:26.4px;background:#ebecf0;border-radius:4px;"></div>
<div class="t" style="left:1203.6px;top:1043px;font-size:20.48px;line-height:24.56px;color:#344563;font-weight:700;letter-spacing:0.38px;">TO DO</div>
<div class="b" style="left:1412px;top:1039.88px;width:24px;height:27.2px;background:#ebecf0;border-radius:4px;"></div>
<div class="t" style="left:1417px;top:1037.32px;font-size:25.6px;line-height:30.72px;color:#42526e;font-weight:700;font-style:italic;">s</div>
<div class="b" style="left:1654.4px;top:1039.88px;width:24px;height:27.2px;background:#ebecf0;border-radius:4px;"></div>
<div class="t" style="left:1659.4px;top:1037.32px;font-size:25.6px;line-height:30.72px;color:#42526e;font-weight:700;font-style:italic;">s</div>
<div class="t" style="left:1494.64px;top:1037.6px;font-size:27.8px;line-height:33.36px;color:#5e6c84;font-style:italic;">24/Apr/23</div>
<div class="t" style="left:1729.4px;top:1037.6px;font-size:27.8px;line-height:33.36px;color:#5e6c84;font-style:italic;">08/May/23</div>
<div class="b" style="left:544.4px;top:1113.96px;width:26.4px;height:26.4px;background:#fafbfc;border-radius:4.8px;border:3.6px solid #dcdfe4;box-sizing:border-box;"></div>
<div class="b" style="left:758.4px;top:1113.16px;width:28px;height:28px;background:#63ba3c;border-radius:4px;"></div>
<svg class="b" style="left:765.6px;top:1118.36px;width:13.6px;height:17.6px;" viewBox="0 0 3.4 4.4"><path d="M0.3 0.3 h2.8 v3.8 l-1.4-1.1 l-1.4 1.1z" fill="#fff"/></svg>
<div class="t" style="left:796px;top:1112.2px;font-size:25.6px;line-height:30.72px;color:#1a6fe6;letter-spacing:-0.39px;-webkit-text-stroke:0.4px #1a6fe6;">ADR-11</div>
<div class="t" style="left:904.8px;top:1111.56px;font-size:26.68px;line-height:32px;color:#172b4d;letter-spacing:-0.01px;-webkit-text-stroke:0.8px #172b4d;">As a user I can log i...</div>
<div class="b" style="left:1196.8px;top:1115.96px;width:79.2px;height:26.4px;background:#ebecf0;border-radius:4px;"></div>
<div class="t" style="left:1203.6px;top:1117.08px;font-size:20.48px;line-height:24.56px;color:#344563;font-weight:700;letter-spacing:0.38px;">TO DO</div>
<div class="b" style="left:1412px;top:1113.96px;width:24px;height:27.2px;background:#ebecf0;border-radius:4px;"></div>
<div class="t" style="left:1417px;top:1111.4px;font-size:25.6px;line-height:30.72px;color:#42526e;font-weight:700;font-style:italic;">s</div>
<div class="b" style="left:1654.4px;top:1113.96px;width:24px;height:27.2px;background:#ebecf0;border-radius:4px;"></div>
<div class="t" style="left:1659.4px;top:1111.4px;font-size:25.6px;line-height:30.72px;color:#42526e;font-weight:700;font-style:italic;">s</div>
<div class="t" style="left:1485.4px;top:1111.68px;font-size:27.8px;line-height:33.36px;color:#5e6c84;font-style:italic;">09/May/23</div>
<div class="t" style="left:1729.4px;top:1111.68px;font-size:27.8px;line-height:33.36px;color:#5e6c84;font-style:italic;">22/May/23</div>
<div class="b" style="left:544.4px;top:1188.04px;width:26.4px;height:26.4px;background:#fafbfc;border-radius:4.8px;border:3.6px solid #dcdfe4;box-sizing:border-box;"></div>
<svg class="b" style="left:684.4px;top:1192.64px;width:12px;height:18px;" viewBox="0 0 4 6"><path d="M1 1 L3 3 L1 5" fill="none" stroke="#172b4d" stroke-width="1.7" stroke-linecap="round" stroke-linejoin="round"/></svg>
<div class="b" style="left:714.8px;top:1186.84px;width:28.8px;height:28.8px;background:#904ee2;border-radius:4px;"></div>
<svg class="b" style="left:720.8px;top:1191.24px;width:16.8px;height:20px;" viewBox="0 0 4.2 5"><path d="M2.9 0.2 L0.7 2.9 H2 L1.3 4.8 L3.6 2.1 H2.3z" fill="#fff"/></svg>
<div class="t" style="left:752px;top:1185.88px;font-size:26.28px;line-height:31.52px;color:#1a6fe6;letter-spacing:-0.01px;-webkit-text-stroke:0.4px #1a6fe6;">ADR-6</div>
<div class="t" style="left:852px;top:1185.32px;font-size:27.2px;line-height:32.64px;color:#172b4d;-webkit-text-stroke:0.8px #172b4d;">Invite and share</div>
<div class="b" style="left:1196.8px;top:1190.04px;width:155.2px;height:26.4px;background:#e4eeff;border-radius:4px;"></div>
<div class="t" style="left:1203.6px;top:1191.16px;font-size:20.48px;line-height:24.56px;color:#0c56cc;font-weight:700;letter-spacing:0.01px;">IN PROGRESS</div>
<svg class="b" style="left:1418.8px;top:1188.44px;width:26.4px;height:28.8px;" viewBox="0 0 6.6 7.2"><path d="M0.9 7 V4.1 a1.5 1.5 0 0 1 1.5-1.5" fill="none" stroke="#7a869a" stroke-width="1.3"/><path d="M2.2 2.6 H4.2" fill="none" stroke="#344563" stroke-width="1.3"/><path d="M3.8 0.4 L6.5 2.6 L3.8 4.8z" fill="#344563"/></svg>
<svg class="b" style="left:1662px;top:1188.44px;width:26.4px;height:28.8px;" viewBox="0 0 6.6 7.2"><path d="M0.9 7 V4.1 a1.5 1.5 0 0 1 1.5-1.5" fill="none" stroke="#7a869a" stroke-width="1.3"/><path d="M2.2 2.6 H4.2" fill="none" stroke="#344563" stroke-width="1.3"/><path d="M3.8 0.4 L6.5 2.6 L3.8 4.8z" fill="#344563"/></svg>
<div class="t" style="left:1493.08px;top:1185.76px;font-size:27.8px;line-height:33.36px;color:#5e6c84;font-style:italic;">06/Jun/23</div>
<div class="t" style="left:1746.36px;top:1185.76px;font-size:27.8px;line-height:33.36px;color:#5e6c84;font-style:italic;">03/Jul/23</div>
<div class="b" style="left:544.4px;top:1262.12px;width:26.4px;height:26.4px;background:#fafbfc;border-radius:4.8px;border:3.6px solid #dcdfe4;box-sizing:border-box;"></div>
<svg class="b" style="left:684.4px;top:1266.72px;width:12px;height:18px;" viewBox="0 0 4 6"><path d="M1 1 L3 3 L1 5" fill="none" stroke="#172b4d" stroke-width="1.7" stroke-linecap="round" stroke-linejoin="round"/></svg>
<div class="b" style="left:714.8px;top:1260.92px;width:28.8px;height:28.8px;background:#904ee2;border-radius:4px;"></div>
<svg class="b" style="left:720.8px;top:1265.32px;width:16.8px;height:20px;" viewBox="0 0 4.2 5"><path d="M2.9 0.2 L0.7 2.9 H2 L1.3 4.8 L3.6 2.1 H2.3z" fill="#fff"/></svg>
<div class="t" style="left:752px;top:1259.96px;font-size:26.28px;line-height:31.52px;color:#1a6fe6;letter-spacing:-0.01px;-webkit-text-stroke:0.4px #1a6fe6;">ADR-7</div>
<div class="t" style="left:852px;top:1259.4px;font-size:27.2px;line-height:32.64px;color:#172b4d;-webkit-text-stroke:0.8px #172b4d;">My Group Trips Overview</div>
<div class="b" style="left:1196.8px;top:1264.12px;width:79.2px;height:26.4px;background:#ebecf0;border-radius:4px;"></div>
<div class="t" style="left:1203.6px;top:1265.24px;font-size:20.48px;line-height:24.56px;color:#344563;font-weight:700;letter-spacing:0.38px;">TO DO</div>
<div class="t" style="left:1409.2px;top:1259.52px;font-size:27px;line-height:32.4px;color:#172b4d;">07/Jul/23</div>
<div class="t" style="left:1651.6px;top:1259.52px;font-size:27px;line-height:32.4px;color:#172b4d;letter-spacing:0.01px;">25/Aug/23</div>
<svg class="b" style="left:1591.2px;top:1263.32px;width:24.8px;height:24.8px;" viewBox="0 0 5.6 5.6"><circle cx="2.8" cy="2.8" r="2.75" fill="#7a869a"/><path d="M1.8 1.8 L3.8 3.8 M3.8 1.8 L1.8 3.8" stroke="#fff" stroke-width="0.7" stroke-linecap="round"/></svg>
<svg class="b" style="left:1834.4px;top:1263.32px;width:24.8px;height:24.8px;" viewBox="0 0 5.6 5.6"><circle cx="2.8" cy="2.8" r="2.75" fill="#7a869a"/><path d="M1.8 1.8 L3.8 3.8 M3.8 1.8 L1.8 3.8" stroke="#fff" stroke-width="0.7" stroke-linecap="round"/></svg>
<div class="b" style="left:544.4px;top:1336.2px;width:26.4px;height:26.4px;background:#fafbfc;border-radius:4.8px;border:3.6px solid #dcdfe4;box-sizing:border-box;"></div>
<div class="t" style="left:592.8px;top:1333.4px;font-size:28px;line-height:33.6px;color:#5e6c84;">2</div>
<svg class="b" style="left:639.2px;top:1340.8px;width:12px;height:18px;" viewBox="0 0 4 6"><path d="M1 1 L3 3 L1 5" fill="none" stroke="#172b4d" stroke-width="1.7" stroke-linecap="round" stroke-linejoin="round"/></svg>
<div class="b" style="left:668.8px;top:1334.6px;width:29.6px;height:29.6px;background:#1d9aaa;border-radius:4px;"></div>
<div class="t" style="left:673.6px;top:1340.04px;font-size:16.28px;line-height:19.52px;color:#fff;font-weight:700;">LE</div>
<div class="t" style="left:706px;top:1333.56px;font-size:27.04px;line-height:32.44px;color:#1a6fe6;-webkit-text-stroke:0.4px #1a6fe6;">IP-7</div>
<div class="t" style="left:777.6px;top:1333.44px;font-size:27.24px;line-height:32.68px;color:#172b4d;-webkit-text-stroke:0.8px #172b4d;">New payment systems</div>
<div class="b" style="left:1196.8px;top:1338.2px;width:155.2px;height:26.4px;background:#e4eeff;border-radius:4px;"></div>
<div class="t" style="left:1203.6px;top:1339.32px;font-size:20.48px;line-height:24.56px;color:#0c56cc;font-weight:700;letter-spacing:0.01px;">IN PROGRESS</div>
<svg class="b" style="left:1418.8px;top:1336.6px;width:26.4px;height:28.8px;" viewBox="0 0 6.6 7.2"><path d="M0.9 7 V4.1 a1.5 1.5 0 0 1 1.5-1.5" fill="none" stroke="#7a869a" stroke-width="1.3"/><path d="M2.2 2.6 H4.2" fill="none" stroke="#344563" stroke-width="1.3"/><path d="M3.8 0.4 L6.5 2.6 L3.8 4.8z" fill="#344563"/></svg>
<svg class="b" style="left:1662px;top:1336.6px;width:26.4px;height:28.8px;" viewBox="0 0 6.6 7.2"><path d="M0.9 7 V4.1 a1.5 1.5 0 0 1 1.5-1.5" fill="none" stroke="#7a869a" stroke-width="1.3"/><path d="M2.2 2.6 H4.2" fill="none" stroke="#344563" stroke-width="1.3"/><path d="M3.8 0.4 L6.5 2.6 L3.8 4.8z" fill="#344563"/></svg>
<div class="t" style="left:1494.64px;top:1333.92px;font-size:27.8px;line-height:33.36px;color:#5e6c84;font-style:italic;">09/Apr/23</div>
<div class="t" style="left:1746.36px;top:1333.92px;font-size:27.8px;line-height:33.36px;color:#5e6c84;font-style:italic;">14/Jul/23</div>
<div class="b" style="left:544.4px;top:1410.28px;width:26.4px;height:26.4px;background:#fafbfc;border-radius:4.8px;border:3.6px solid #dcdfe4;box-sizing:border-box;"></div>
<div class="t" style="left:592.8px;top:1407.48px;font-size:28px;line-height:33.6px;color:#5e6c84;">3</div>
<svg class="b" style="left:639.2px;top:1414.88px;width:12px;height:18px;" viewBox="0 0 4 6"><path d="M1 1 L3 3 L1 5" fill="none" stroke="#172b4d" stroke-width="1.7" stroke-linecap="round" stroke-linejoin="round"/></svg>
<div class="b" style="left:668.8px;top:1408.68px;width:29.6px;height:29.6px;background:#1d9aaa;border-radius:4px;"></div>
<div class="t" style="left:673.6px;top:1414.12px;font-size:16.28px;line-height:19.52px;color:#fff;font-weight:700;">LE</div>
<div class="t" style="left:706px;top:1407.64px;font-size:27.04px;line-height:32.44px;color:#1a6fe6;-webkit-text-stroke:0.4px #1a6fe6;">IP-5</div>
<div class="t" style="left:778.4px;top:1407.16px;font-size:27.88px;line-height:33.44px;color:#172b4d;letter-spacing:0.01px;-webkit-text-stroke:0.8px #172b4d;">Intelligent travel suggestions</div>
<div class="b" style="left:1196.8px;top:1412.28px;width:114.4px;height:26.4px;background:#ebecf0;border-radius:4px;"></div>
<div class="t" style="left:1203.6px;top:1413.64px;font-size:20.08px;line-height:24.08px;color:#344563;font-weight:700;letter-spacing:0.01px;">BACKLOG</div>
<svg class="b" style="left:1418.8px;top:1410.68px;width:26.4px;height:28.8px;" viewBox="0 0 6.6 7.2"><path d="M0.9 7 V4.1 a1.5 1.5 0 0 1 1.5-1.5" fill="none" stroke="#7a869a" stroke-width="1.3"/><path d="M2.2 2.6 H4.2" fill="none" stroke="#344563" stroke-width="1.3"/><path d="M3.8 0.4 L6.5 2.6 L3.8 4.8z" fill="#344563"/></svg>
<svg class="b" style="left:1662px;top:1410.68px;width:26.4px;height:28.8px;" viewBox="0 0 6.6 7.2"><path d="M0.9 7 V4.1 a1.5 1.5 0 0 1 1.5-1.5" fill="none" stroke="#7a869a" stroke-width="1.3"/><path d="M2.2 2.6 H4.2" fill="none" stroke="#344563" stroke-width="1.3"/><path d="M3.8 0.4 L6.5 2.6 L3.8 4.8z" fill="#344563"/></svg>
<div class="t" style="left:1493.08px;top:1408px;font-size:27.8px;line-height:33.36px;color:#5e6c84;font-style:italic;">20/Jun/23</div>
<div class="t" style="left:1746.36px;top:1408px;font-size:27.8px;line-height:33.36px;color:#5e6c84;font-style:italic;">03/Jul/23</div>
<div class="b" style="left:544.4px;top:1484.36px;width:26.4px;height:26.4px;background:#fafbfc;border-radius:4.8px;border:3.6px solid #dcdfe4;box-sizing:border-box;"></div>
<div class="t" style="left:592.8px;top:1481.56px;font-size:28px;line-height:33.6px;color:#5e6c84;">4</div>
<svg class="b" style="left:639.2px;top:1488.96px;width:12px;height:18px;" viewBox="0 0 4 6"><path d="M1 1 L3 3 L1 5" fill="none" stroke="#172b4d" stroke-width="1.7" stroke-linecap="round" stroke-linejoin="round"/></svg>
<div class="b" style="left:668.8px;top:1482.76px;width:29.6px;height:29.6px;background:#1d9aaa;border-radius:4px;"></div>
<div class="t" style="left:673.6px;top:1488.2px;font-size:16.28px;line-height:19.52px;color:#fff;font-weight:700;">LE</div>
<div class="t" style="left:706px;top:1481.72px;font-size:27.04px;line-height:32.44px;color:#1a6fe6;-webkit-text-stroke:0.4px #1a6fe6;">IP-3</div>
<div class="t" style="left:778.4px;top:1481.08px;font-size:28.16px;line-height:33.8px;color:#172b4d;letter-spacing:0.01px;-webkit-text-stroke:0.8px #172b4d;">Multi-destination search</div>
<div class="b" style="left:1196.8px;top:1486.36px;width:114.4px;height:26.4px;background:#ebecf0;border-radius:4px;"></div>
<div class="t" style="left:1203.6px;top:1487.72px;font-size:20.08px;line-height:24.08px;color:#344563;font-weight:700;letter-spacing:0.01px;">BACKLOG</div>
<svg class="b" style="left:1418.8px;top:1484.76px;width:26.4px;height:28.8px;" viewBox="0 0 6.6 7.2"><path d="M0.9 7 V4.1 a1.5 1.5 0 0 1 1.5-1.5" fill="none" stroke="#7a869a" stroke-width="1.3"/><path d="M2.2 2.6 H4.2" fill="none" stroke="#344563" stroke-width="1.3"/><path d="M3.8 0.4 L6.5 2.6 L3.8 4.8z" fill="#344563"/></svg>
<svg class="b" style="left:1662px;top:1484.76px;width:26.4px;height:28.8px;" viewBox="0 0 6.6 7.2"><path d="M0.9 7 V4.1 a1.5 1.5 0 0 1 1.5-1.5" fill="none" stroke="#7a869a" stroke-width="1.3"/><path d="M2.2 2.6 H4.2" fill="none" stroke="#344563" stroke-width="1.3"/><path d="M3.8 0.4 L6.5 2.6 L3.8 4.8z" fill="#344563"/></svg>
<div class="t" style="left:1493.08px;top:1482.08px;font-size:27.8px;line-height:33.36px;color:#5e6c84;font-style:italic;">06/Jun/23</div>
<div class="t" style="left:1732.44px;top:1482.08px;font-size:27.8px;line-height:33.36px;color:#5e6c84;font-style:italic;">14/Aug/23</div>
<div class="b" style="left:544.4px;top:1558.44px;width:26.4px;height:26.4px;background:#fafbfc;border-radius:4.8px;border:3.6px solid #dcdfe4;box-sizing:border-box;"></div>
<div class="t" style="left:592.8px;top:1555.64px;font-size:28px;line-height:33.6px;color:#5e6c84;">5</div>
<svg class="b" style="left:639.2px;top:1563.04px;width:12px;height:18px;" viewBox="0 0 4 6"><path d="M1 1 L3 3 L1 5" fill="none" stroke="#172b4d" stroke-width="1.7" stroke-linecap="round" stroke-linejoin="round"/></svg>
<div class="b" style="left:668.8px;top:1556.84px;width:29.6px;height:29.6px;background:#1d9aaa;border-radius:4px;"></div>
<div class="t" style="left:673.6px;top:1562.28px;font-size:16.28px;line-height:19.52px;color:#fff;font-weight:700;">LE</div>
<div class="t" style="left:706px;top:1555.8px;font-size:27.04px;line-height:32.44px;color:#1a6fe6;-webkit-text-stroke:0.4px #1a6fe6;">IP-6</div>
<div class="t" style="left:778.4px;top:1555.4px;font-size:27.76px;line-height:33.32px;color:#172b4d;letter-spacing:0.01px;-webkit-text-stroke:0.8px #172b4d;">Performance level-up</div>
<div class="b" style="left:1196.8px;top:1560.44px;width:114.4px;height:26.4px;background:#ebecf0;border-radius:4px;"></div>
<div class="t" style="left:1203.6px;top:1561.8px;font-size:20.08px;line-height:24.08px;color:#344563;font-weight:700;letter-spacing:0.01px;">BACKLOG</div>
<svg class="b" style="left:1418.8px;top:1558.84px;width:26.4px;height:28.8px;" viewBox="0 0 6.6 7.2"><path d="M0.9 7 V4.1 a1.5 1.5 0 0 1 1.5-1.5" fill="none" stroke="#7a869a" stroke-width="1.3"/><path d="M2.2 2.6 H4.2" fill="none" stroke="#344563" stroke-width="1.3"/><path d="M3.8 0.4 L6.5 2.6 L3.8 4.8z" fill="#344563"/></svg>
<svg class="b" style="left:1662px;top:1558.84px;width:26.4px;height:28.8px;" viewBox="0 0 6.6 7.2"><path d="M0.9 7 V4.1 a1.5 1.5 0 0 1 1.5-1.5" fill="none" stroke="#7a869a" stroke-width="1.3"/><path d="M2.2 2.6 H4.2" fill="none" stroke="#344563" stroke-width="1.3"/><path d="M3.8 0.4 L6.5 2.6 L3.8 4.8z" fill="#344563"/></svg>
<div class="t" style="left:1488.44px;top:1556.16px;font-size:27.8px;line-height:33.36px;color:#5e6c84;font-style:italic;">27/Aug/23</div>
<div class="t" style="left:1738.68px;top:1556.16px;font-size:27.8px;line-height:33.36px;color:#5e6c84;font-style:italic;">07/Oct/23</div>
<div class="t" style="left:1892px;top:366.72px;font-size:22.8px;line-height:27.36px;color:#505f79;font-weight:700;letter-spacing:0.85px;">APR 2023</div>
<div class="t" style="left:2222.4px;top:366.72px;font-size:22.8px;line-height:27.36px;color:#505f79;font-weight:700;letter-spacing:1.15px;">MAY 2023</div>
<div class="t" style="left:2682.4px;top:366.72px;font-size:22.8px;line-height:27.36px;color:#505f79;font-weight:700;letter-spacing:0.97px;">JUN 2023</div>
<div class="b" style="left:1893.6px;top:413.6px;width:2.4px;height:25.6px;background:#e3e6ea;"></div>
<div class="t" style="left:1909.04px;top:412px;font-size:24px;line-height:28.8px;color:#626f86;">10</div>
<div class="b" style="left:1997.4px;top:413.6px;width:2.4px;height:25.6px;background:#e3e6ea;"></div>
<div class="t" style="left:2012.84px;top:412px;font-size:24px;line-height:28.8px;color:#626f86;">17</div>
<div class="b" style="left:2101.2px;top:413.6px;width:2.4px;height:25.6px;background:#e3e6ea;"></div>
<div class="t" style="left:2116.64px;top:412px;font-size:24px;line-height:28.8px;color:#626f86;">24</div>
<div class="b" style="left:2205px;top:413.6px;width:2.4px;height:25.6px;background:#e3e6ea;"></div>
<div class="t" style="left:2227.12px;top:412px;font-size:24px;line-height:28.8px;color:#626f86;">1</div>
<div class="b" style="left:2308.8px;top:413.6px;width:2.4px;height:25.6px;background:#e3e6ea;"></div>
<div class="t" style="left:2330.92px;top:412px;font-size:24px;line-height:28.8px;color:#626f86;">8</div>
<div class="b" style="left:2412.6px;top:413.6px;width:2.4px;height:25.6px;background:#e3e6ea;"></div>
<div class="t" style="left:2428.04px;top:412px;font-size:24px;line-height:28.8px;color:#626f86;">15</div>
<div class="b" style="left:2516.4px;top:413.6px;width:2.4px;height:25.6px;background:#e3e6ea;"></div>
<div class="t" style="left:2531.84px;top:412px;font-size:24px;line-height:28.8px;color:#626f86;">22</div>
<div class="b" style="left:2620.2px;top:413.6px;width:2.4px;height:25.6px;background:#e3e6ea;"></div>
<div class="t" style="left:2635.64px;top:412px;font-size:24px;line-height:28.8px;color:#626f86;">29</div>
<div class="b" style="left:2724px;top:413.6px;width:2.4px;height:25.6px;background:#e3e6ea;"></div>
<div class="t" style="left:2746.12px;top:412px;font-size:24px;line-height:28.8px;color:#626f86;">5</div>
<div class="b" style="left:1884px;top:507.2px;width:202.8px;height:55.2px;background:#e9f2ff;border-radius:5.6px;"></div>
<div class="b" style="left:1892.8px;top:518.8px;width:8.8px;height:32.8px;background:#1f845a;border-radius:2.4px;"></div>
<div class="t" style="left:1913.2px;top:521.48px;font-size:22.88px;line-height:27.44px;color:#0c66e4;font-weight:700;letter-spacing:-0.09px;">ADR Sprint 1</div>
<div class="b" style="left:2107.2px;top:507.2px;width:215.6px;height:55.2px;background:#dfe1e6;border-radius:5.6px;"></div>
<div class="b" style="left:2116px;top:518.8px;width:8.8px;height:32.8px;background:#1f845a;border-radius:2.4px;"></div>
<div class="t" style="left:2136.4px;top:521.48px;font-size:22.88px;line-height:27.44px;color:#344563;font-weight:700;letter-spacing:-0.09px;">ADR Sprint 2</div>
<div class="b" style="left:2329.6px;top:507.2px;width:200px;height:55.2px;background:#dfe1e6;border-radius:5.6px;"></div>
<div class="b" style="left:2338.4px;top:518.8px;width:8.8px;height:32.8px;background:#1f845a;border-radius:2.4px;"></div>
<div class="t" style="left:2358.8px;top:521.48px;font-size:22.88px;line-height:27.44px;color:#344563;font-weight:700;letter-spacing:-0.09px;">ADR Sprint 3</div>
<div class="b" style="left:2536px;top:507.2px;width:202px;height:55.2px;background:#dfe1e6;border-radius:5.6px;"></div>
<div class="b" style="left:2544.8px;top:518.8px;width:8.8px;height:32.8px;background:#1f845a;border-radius:2.4px;"></div>
<div class="t" style="left:2565.2px;top:521.48px;font-size:22.88px;line-height:27.44px;color:#344563;font-weight:700;letter-spacing:-0.09px;">ADR Sprint 4</div>
<div class="b" style="left:2744.8px;top:507.2px;width:215.2px;height:55.2px;background:#dfe1e6;border-radius:5.6px;"></div>
<div class="b" style="left:2753.6px;top:518.8px;width:8.8px;height:32.8px;background:#1f845a;border-radius:2.4px;"></div>
<div class="t" style="left:2774px;top:521.48px;font-size:22.88px;line-height:27.44px;color:#344563;font-weight:700;letter-spacing:-0.09px;">ADR Sprint 5</div>
<svg class="b" style="left:0px;top:0px;width:2800px;height:1604px;" viewBox="0 0 700 401"><path d="M522.3 207.7 C 544.5 207.7, 559.2 281.8, 581.4 281.8" fill="none" stroke="#7f8aa0" stroke-width="1"/><path d="M581.4 263.3 C 585.5 263.3, 588.8 265.3, 584.8 269.9 L 578.6 276.5 C 575 280.4, 577 281.8, 581.4 281.8" fill="none" stroke="#7f8aa0" stroke-width="1"/></svg>
<div class="b" style="left:1881.6px;top:586.8px;width:926.4px;height:43.6px;background:repeating-linear-gradient(118deg,#0747a6 1.2px,#0747a6 25.6px,#09326c 29.6px,#09326c 54px,#0747a6 58px);border-radius:6.4px 0px 0px 6.4px;"></div>
<svg class="b" style="left:2734.8px;top:599.8px;width:20.8px;height:17.6px;" viewBox="0 0 5.2 4.4"><path d="M0.6 2.2 H4.4 M2.8 0.6 L4.5 2.2 L2.8 3.8" fill="none" stroke="#fff" stroke-width="1.15" stroke-linecap="round" stroke-linejoin="round"/></svg>
<div class="b" style="left:1881.6px;top:660.88px;width:650.4px;height:43.6px;background:repeating-linear-gradient(118deg,#0747a6 1.2px,#0747a6 25.6px,#09326c 29.6px,#09326c 54px,#0747a6 58px);border-radius:6.4px 6.4px 6.4px 6.4px;"></div>
<div class="b" style="left:1881.6px;top:734.96px;width:207.6px;height:43.6px;background:#0747a6;border-radius:6.4px 6.4px 6.4px 6.4px;"></div>
<div class="b" style="left:1881.6px;top:809.04px;width:207.6px;height:43.6px;background:#0747a6;border-radius:6.4px 6.4px 6.4px 6.4px;"></div>
<div class="b" style="left:1881.6px;top:883.12px;width:207.6px;height:43.6px;background:#1c6b4a;border-radius:6.4px 6.4px 6.4px 6.4px;"></div>
<svg class="b" style="left:2058.4px;top:895.32px;width:19.2px;height:19.2px;" viewBox="0 0 4.8 4.8"><path d="M1 3.8 L3.8 1" stroke="#fff" stroke-width="1.5" stroke-linecap="round"/><path d="M1.6 3.2 L3.2 1.6" stroke="#44546f" stroke-width="0.4"/></svg>
<div class="b" style="left:2103.2px;top:957.2px;width:222.4px;height:43.6px;background:#44546f;border-radius:6.4px 6.4px 6.4px 6.4px;"></div>
<div class="b" style="left:2103.2px;top:1031.28px;width:222.4px;height:43.6px;background:#44546f;border-radius:6.4px 6.4px 6.4px 6.4px;"></div>
<div class="b" style="left:2325.6px;top:1105.36px;width:208.4px;height:43.6px;background:#44546f;border-radius:6.4px 6.4px 6.4px 6.4px;"></div>
<svg class="b" style="left:2502.4px;top:1117.56px;width:19.2px;height:19.2px;" viewBox="0 0 4.8 4.8"><path d="M1 3.8 L3.8 1" stroke="#fff" stroke-width="1.5" stroke-linecap="round"/><path d="M1.6 3.2 L3.2 1.6" stroke="#44546f" stroke-width="0.4"/></svg>
<div class="b" style="left:2728px;top:1180.04px;width:80px;height:42.4px;background:repeating-linear-gradient(118deg,#0747a6 1.2px,#0747a6 25.6px,#09326c 29.6px,#09326c 54px,#0747a6 58px);border-radius:21.6px 0px 0px 21.6px;"></div>
<div class="b" style="left:2726.6px;top:1182.64px;width:37.2px;height:37.2px;background:#0b2d63;border-radius:18.6px;"></div>
<svg class="b" style="left:2734.8px;top:1192.44px;width:20.8px;height:17.6px;" viewBox="0 0 5.2 4.4"><path d="M0.6 2.2 H4.4 M2.8 0.6 L4.5 2.2 L2.8 3.8" fill="none" stroke="#fff" stroke-width="1.15" stroke-linecap="round" stroke-linejoin="round"/></svg>
<div class="b" style="left:2726.6px;top:1256.72px;width:37.2px;height:37.2px;background:#0b2d63;border-radius:18.6px;"></div>
<svg class="b" style="left:2734.8px;top:1266.52px;width:20.8px;height:17.6px;" viewBox="0 0 5.2 4.4"><path d="M0.6 2.2 H4.4 M2.8 0.6 L4.5 2.2 L2.8 3.8" fill="none" stroke="#fff" stroke-width="1.15" stroke-linecap="round" stroke-linejoin="round"/></svg>
<div class="b" style="left:1881.6px;top:1327.6px;width:926.4px;height:43.6px;background:repeating-linear-gradient(118deg,#0747a6 1.2px,#0747a6 25.6px,#09326c 29.6px,#09326c 54px,#0747a6 58px);border-radius:6.4px 0px 0px 6.4px;"></div>
<svg class="b" style="left:2734.8px;top:1340.6px;width:20.8px;height:17.6px;" viewBox="0 0 5.2 4.4"><path d="M0.6 2.2 H4.4 M2.8 0.6 L4.5 2.2 L2.8 3.8" fill="none" stroke="#fff" stroke-width="1.15" stroke-linecap="round" stroke-linejoin="round"/></svg>
<div class="b" style="left:2726.6px;top:1404.88px;width:37.2px;height:37.2px;background:#0b2d63;border-radius:18.6px;"></div>
<svg class="b" style="left:2734.8px;top:1414.68px;width:20.8px;height:17.6px;" viewBox="0 0 5.2 4.4"><path d="M0.6 2.2 H4.4 M2.8 0.6 L4.5 2.2 L2.8 3.8" fill="none" stroke="#fff" stroke-width="1.15" stroke-linecap="round" stroke-linejoin="round"/></svg>
<div class="b" style="left:2728px;top:1476.36px;width:80px;height:42.4px;background:repeating-linear-gradient(118deg,#44546f 1.2px,#44546f 25.6px,#2c3e5d 29.6px,#2c3e5d 54px,#44546f 58px);border-radius:21.6px 0px 0px 21.6px;"></div>
<div class="b" style="left:2726.6px;top:1478.96px;width:37.2px;height:37.2px;background:#0b2d63;border-radius:18.6px;"></div>
<svg class="b" style="left:2734.8px;top:1488.76px;width:20.8px;height:17.6px;" viewBox="0 0 5.2 4.4"><path d="M0.6 2.2 H4.4 M2.8 0.6 L4.5 2.2 L2.8 3.8" fill="none" stroke="#fff" stroke-width="1.15" stroke-linecap="round" stroke-linejoin="round"/></svg>
<div class="b" style="left:2726.6px;top:1553.04px;width:37.2px;height:37.2px;background:#0b2d63;border-radius:18.6px;"></div>
<svg class="b" style="left:2734.8px;top:1562.84px;width:20.8px;height:17.6px;" viewBox="0 0 5.2 4.4"><path d="M0.6 2.2 H4.4 M2.8 0.6 L4.5 2.2 L2.8 3.8" fill="none" stroke="#fff" stroke-width="1.15" stroke-linecap="round" stroke-linejoin="round"/></svg>
<div class="b" style="left:1963.2px;top:450.4px;width:3.6px;height:1160px;background:#f5a54a;"></div>
<svg class="b" style="left:1956.8px;top:449.2px;width:16.8px;height:10.4px;" viewBox="0 0 4.2 2.6"><path d="M0 0 H4.2 L2.1 2.6z" fill="#f18d13"/></svg>
<div class="b" style="left:2221.2px;top:1500px;width:55.2px;height:60px;background:#fff;border-radius:6.4px;box-shadow:0 0 2.4px rgba(9,30,66,0.35),0 4.8px 12px rgba(9,30,66,0.22);"></div>
<svg class="b" style="left:2241.6px;top:1518.4px;width:16px;height:23.2px;" viewBox="0 0 4 5.8"><path d="M3 0.8 L1 2.9 L3 5" fill="none" stroke="#253858" stroke-width="1.3" stroke-linecap="round" stroke-linejoin="round"/></svg>
<div class="b" style="left:2287.2px;top:1500px;width:55.2px;height:60px;background:#fff;border-radius:6.4px;box-shadow:0 0 2.4px rgba(9,30,66,0.35),0 4.8px 12px rgba(9,30,66,0.22);"></div>
<svg class="b" style="left:2307.2px;top:1518.4px;width:16px;height:23.2px;" viewBox="0 0 4 5.8"><path d="M1 0.8 L3 2.9 L1 5" fill="none" stroke="#253858" stroke-width="1.3" stroke-linecap="round" stroke-linejoin="round"/></svg>
<div class="b" style="left:2361.2px;top:1500px;width:115.2px;height:60px;background:#fff;border-radius:6.4px;box-shadow:0 0 2.4px rgba(9,30,66,0.35),0 4.8px 12px rgba(9,30,66,0.22);"></div>
<div class="t" style="left:2383.2px;top:1514.4px;font-size:26.68px;line-height:32px;color:#253858;-webkit-text-stroke:0.8px #253858;">Today</div>
<div class="b" style="left:2494px;top:1500px;width:185.6px;height:60px;background:#fff;border-radius:6.4px;box-shadow:0 0 2.4px rgba(9,30,66,0.35),0 4.8px 12px rgba(9,30,66,0.22);"></div>
<div class="t" style="left:2516px;top:1513.88px;font-size:27.56px;line-height:33.08px;color:#253858;-webkit-text-stroke:0.8px #253858;">Months</div>
<svg class="b" style="left:2629.4px;top:1525.6px;width:18px;height:12px;" viewBox="0 0 6 4"><path d="M1 1 L3 3 L5 1" fill="none" stroke="#253858" stroke-width="1.4" stroke-linecap="round" stroke-linejoin="round"/></svg>
<div class="b" style="left:2698.4px;top:1500px;width:58.4px;height:60px;background:#fff;border-radius:6.4px;box-shadow:0 0 2.4px rgba(9,30,66,0.35),0 4.8px 12px rgba(9,30,66,0.22);"></div>
<svg class="b" style="left:2713.6px;top:1516px;width:28px;height:28px;" viewBox="0 0 7 7"><path d="M3.9 0.5 H6.5 V3.1z M3.1 6.5 H0.5 V3.9z" fill="#253858"/><path d="M5.8 1.2 L4.3 2.7 M1.2 5.8 L2.7 4.3" stroke="#253858" stroke-width="1.2" stroke-linecap="round"/></svg>
<div class="b" style="left:2194px;top:1585.2px;width:41.6px;height:18px;background:#c4c9d1;border-radius:9px;"></div>
</div></div></body></html>
